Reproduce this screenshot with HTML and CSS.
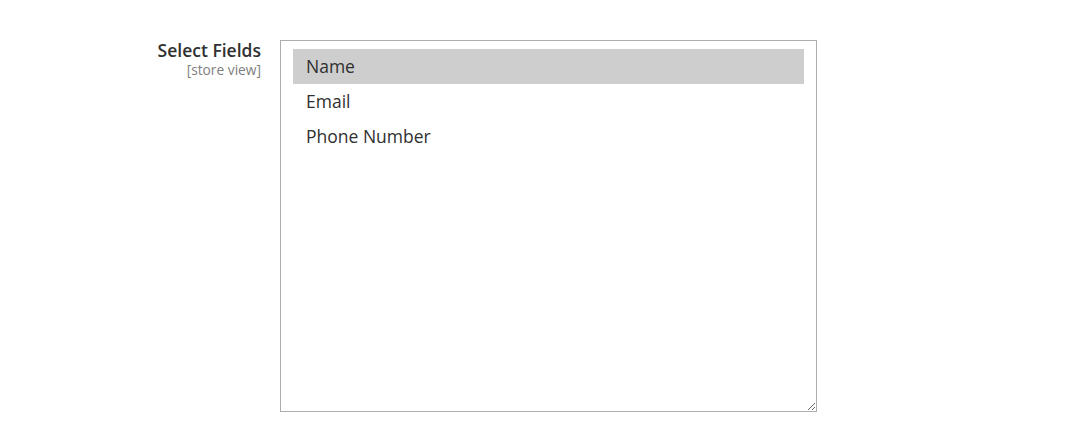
FILE: index.html
```html
<!DOCTYPE html>
<html>
<head>
<meta charset="utf-8">
<link rel="stylesheet" href="styles.css">
</head>
<body>
<div class="field">
  <div class="label">
    <span class="label-title">Select Fields</span>
    <span class="label-scope">[store view]</span>
  </div>
  <div class="multiselect">
    <div class="option selected">Name</div>
    <div class="option">Email</div>
    <div class="option">Phone Number</div>
  </div>
</div>
</body>
</html>
```
FILE: styles.css
```css
html, body {
  margin: 0;
  padding: 0;
  background: #ffffff;
}
body {
  font-family: "Open Sans", "Liberation Sans", sans-serif;
  color: #303030;
}
.field {
  display: flex;
  align-items: flex-start;
  padding-top: 40px;
  gap: 19px;
}
.label {
  width: 261px;
  display: flex;
  flex-direction: column;
  align-items: flex-end;
}
.label-title {
  font-size: 17.5px;
  font-weight: 600;
  line-height: 21px;
  color: #303030;
}
.label-scope {
  font-size: 13.75px;
  line-height: 18px;
  color: #808080;
}
.multiselect {
  box-sizing: border-box;
  width: 537px;
  height: 372px;
  border: 1px solid #adadad;
  padding: 8px 12px;
  overflow: auto;
  resize: vertical;
}
.option {
  height: 35px;
  line-height: 34px;
  padding-left: 13px;
  font-size: 17.5px;
  color: #303030;
}
.option.selected {
  background: #cecece;
}
```
